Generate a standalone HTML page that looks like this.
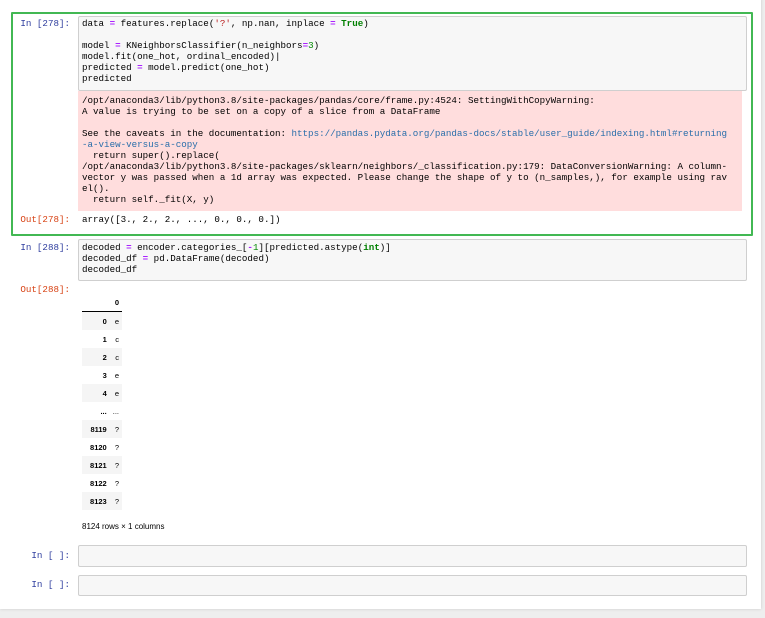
<!DOCTYPE html>
<html><head><style>
body{margin:0;background:#eee;width:765px;height:618px;overflow:hidden;position:relative;font-family:"Liberation Mono",monospace;}
.page{position:absolute;left:0;top:-2px;width:761px;height:611px;background:#fff;box-shadow:0 0 3px rgba(0,0,0,.15);}
.abs{position:absolute;}
.code{font-size:9.2px;line-height:11px;white-space:pre;color:#000;}
.pr{font-size:9.2px;color:#303f9f;text-align:right;width:70px;left:0;}
.po{color:#d84315;}
.inp{background:#f7f7f7;border:1px solid #cfcfcf;border-radius:2px;}
.k{color:#008000;font-weight:bold}.o{color:#aa22ff;font-weight:bold}.s{color:#ba2121}.n{color:#080}
a{color:#296eaa;text-decoration:none}
table{border-collapse:collapse;font-family:"Liberation Sans",sans-serif;font-size:7.5px;}
td,th{height:18px;padding:0 3px;text-align:right;}
th{font-weight:bold}
tr.g{background:#f5f5f5}
</style></head><body>
<div class="page"></div>
<div class="abs" style="left:11px;top:12px;width:738px;height:220px;border:2px solid #42b853;border-radius:1px;"></div>
<div class="abs pr code" style="top:18px;">In [278]:</div>
<div class="abs inp" style="left:78px;top:16px;width:667px;height:73px;"></div>
<div class="abs code" style="left:82px;top:18px;">data <span class="o">=</span> features.replace(<span class="s">'?'</span>, np.nan, inplace <span class="o">=</span> <span class="k">True</span>)

model <span class="o">=</span> KNeighborsClassifier(n_neighbors<span class="o">=</span><span class="n">3</span>)
model.fit(one_hot, ordinal_encoded)|
predicted <span class="o">=</span> model.predict(one_hot)
predicted</div>
<div class="abs" style="left:78px;top:91px;width:664px;height:120px;background:#fdd;"></div>
<div class="abs code" style="left:82px;top:95px;">/opt/anaconda3/lib/python3.8/site-packages/pandas/core/frame.py:4524: SettingWithCopyWarning:
A value is trying to be set on a copy of a slice from a DataFrame

See the caveats in the documentation: <a>https://pandas.pydata.org/pandas-docs/stable/user_guide/indexing.html#returning</a>
<a>-a-view-versus-a-copy</a>
  return super().replace(
/opt/anaconda3/lib/python3.8/site-packages/sklearn/neighbors/_classification.py:179: DataConversionWarning: A column-
vector y was passed when a 1d array was expected. Please change the shape of y to (n_samples,), for example using rav
el().
  return self._fit(X, y)</div>
<div class="abs pr code po" style="top:214px;">Out[278]:</div>
<div class="abs code" style="left:82px;top:214px;">array([3., 2., 2., ..., 0., 0., 0.])</div>

<div class="abs pr code" style="top:242px;">In [288]:</div>
<div class="abs inp" style="left:78px;top:239px;width:667px;height:40px;"></div>
<div class="abs code" style="left:82px;top:242px;">decoded <span class="o">=</span> encoder.categories_[<span class="o">-</span><span class="n">1</span>][predicted.astype(<span class="k">int</span>)]
decoded_df <span class="o">=</span> pd.DataFrame(decoded)
decoded_df</div>
<div class="abs pr code po" style="top:284px;">Out[288]:</div>
<table class="abs" style="left:82px;top:293px;width:40px;">
<tr style="border-bottom:1px solid #000"><th style="width:22px"></th><th>0</th></tr>
<tr class="g"><th>0</th><td>e</td></tr>
<tr><th>1</th><td>c</td></tr>
<tr class="g"><th>2</th><td>c</td></tr>
<tr><th>3</th><td>e</td></tr>
<tr class="g"><th>4</th><td>e</td></tr>
<tr><th>...</th><td>...</td></tr>
<tr class="g"><th>8119</th><td>?</td></tr>
<tr><th>8120</th><td>?</td></tr>
<tr class="g"><th>8121</th><td>?</td></tr>
<tr><th>8122</th><td>?</td></tr>
<tr class="g"><th>8123</th><td>?</td></tr>
</table>
<div class="abs" style="left:82px;top:522px;font-family:'Liberation Sans',sans-serif;font-size:8px;">8124 rows × 1 columns</div>

<div class="abs pr code" style="top:550px;">In [ ]:</div>
<div class="abs inp" style="left:78px;top:545px;width:667px;height:20px;"></div>
<div class="abs pr code" style="top:579px;">In [ ]:</div>
<div class="abs inp" style="left:78px;top:575px;width:667px;height:19px;"></div>
</body></html>
